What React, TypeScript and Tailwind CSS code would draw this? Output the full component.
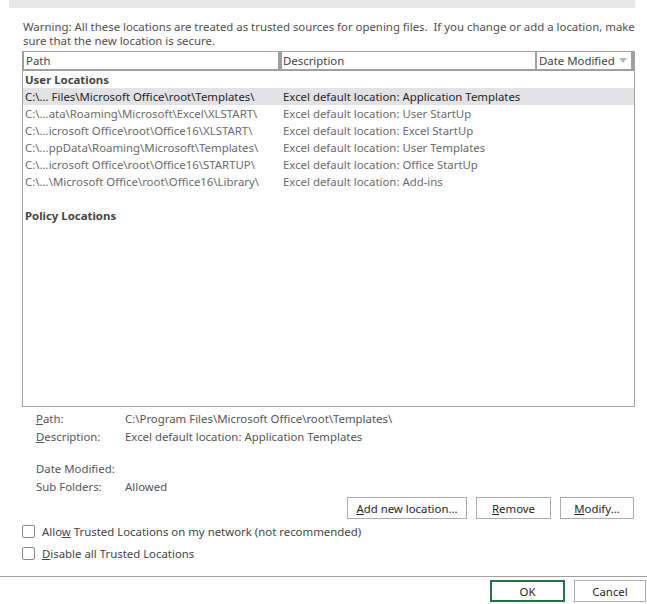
import React from 'react';

const rows = [
  { path: 'C:\\... Files\\Microsoft Office\\root\\Templates\\', desc: 'Excel default location: Application Templates', selected: true },
  { path: 'C:\\...ata\\Roaming\\Microsoft\\Excel\\XLSTART\\', desc: 'Excel default location: User StartUp' },
  { path: 'C:\\...icrosoft Office\\root\\Office16\\XLSTART\\', desc: 'Excel default location: Excel StartUp' },
  { path: 'C:\\...ppData\\Roaming\\Microsoft\\Templates\\', desc: 'Excel default location: User Templates' },
  { path: 'C:\\...icrosoft Office\\root\\Office16\\STARTUP\\', desc: 'Excel default location: Office StartUp' },
  { path: 'C:\\...\\Microsoft Office\\root\\Office16\\Library\\', desc: 'Excel default location: Add-ins' },
];

function Button({ children, className = '' }: { children: React.ReactNode; className?: string }) {
  return (
    <button className={`h-[22px] border border-[#adadad] bg-white text-[#262626] flex items-center justify-center ${className}`}>
      {children}
    </button>
  );
}

function Checkbox({ children }: { children: React.ReactNode }) {
  return (
    <label className="flex items-center h-[18px] pl-[22px] text-[#444]">
      <span className="w-[13px] h-[13px] border border-[#8a8a8a] rounded-[2px] bg-white" />
      <span className="ml-[7px]">{children}</span>
    </label>
  );
}

export default function App() {
  return (
    <div className="w-[647px] h-[604px] bg-white overflow-hidden text-[11.4px] leading-[17px] text-[#444] font-['Segoe_UI','Noto_Sans',sans-serif]">
      <div className="ml-[9px] w-[626px] h-[8px] bg-[#e8e8e8]" />

      <p className="ml-[23px] mt-[12px] w-[615px] leading-[14px] text-[#505050]">
        Warning: All these locations are treated as trusted sources for opening files.&nbsp; If you change or add a location, make sure that the new location is secure.
      </p>

      {/* Locations list */}
      <div className="ml-[22px] mt-[3px] w-[613px] h-[356px] border border-[#a0a0a0] bg-white">
        <div className="flex h-[19px] bg-[#a0a0a0] pl-[1px] pb-[2px]">
          <div className="w-[254px] bg-white pl-[2px] leading-[17px]">Path</div>
          <div className="w-[253px] ml-[4px] bg-white pl-[1px] leading-[17px]">Description</div>
          <div className="w-[94px] ml-[2px] bg-white pl-[2px] leading-[17px] flex items-center justify-between pr-[4px]">
            <span>Date Modified</span>
            <svg width="8" height="5" viewBox="0 0 8 5"><path d="M0 0h8L4 5z" fill="#b8b8b8" /></svg>
          </div>
        </div>
        <div className="h-[17px] pl-[2px] font-bold text-[#444]">User Locations</div>
        {rows.map(r => (
          <div
            key={r.path}
            className={`flex h-[17px] whitespace-nowrap ${r.selected ? 'bg-[#e2e2e7] text-[#262626]' : 'text-[#6b6b6b]'}`}
          >
            <div className="w-[260px] pl-[2px]">{r.path}</div>
            <div>{r.desc}</div>
          </div>
        ))}
        <div className="h-[17px]" />
        <div className="h-[17px] pl-[2px] font-bold text-[#444]">Policy Locations</div>
      </div>

      {/* Details */}
      <div className="mt-[2px] pl-[36px] text-[#555]">
        <div className="flex h-[18px] items-center">
          <span className="w-[89px]"><u>P</u>ath:</span>
          <span>C:\Program Files\Microsoft Office\root\Templates\</span>
        </div>
        <div className="flex h-[18px] items-center">
          <span className="w-[89px]"><u>D</u>escription:</span>
          <span>Excel default location: Application Templates</span>
        </div>
        <div className="h-[14px]" />
        <div className="flex h-[18px] items-center">
          <span className="w-[89px]">Date Modified:</span>
          <span />
        </div>
        <div className="flex h-[19px] items-center">
          <span className="w-[89px]">Sub Folders:</span>
          <span>Allowed</span>
        </div>
      </div>

      <div className="mt-[1px] flex justify-end gap-[9px] pr-[13px]">
        <Button className="w-[120px]"><u>A</u>dd new location...</Button>
        <Button className="w-[75px]"><u>R</u>emove</Button>
        <Button className="w-[74px]"><u>M</u>odify...</Button>
      </div>

      <div className="mt-[3px]">
        <Checkbox>Allo<u>w</u> Trusted Locations on my network (not recommended)</Checkbox>
      </div>
      <div className="mt-[4px]">
        <Checkbox><u>D</u>isable all Trusted Locations</Checkbox>
      </div>

      <div className="mt-[14px] h-px bg-[#a0a0a0]" />

      <div className="mt-[3px] flex gap-[9px] pl-[490px]">
        <Button className="w-[75px] !border-2 !border-[#217346]">OK</Button>
        <Button className="w-[72px] shrink-0">Cancel</Button>
      </div>
    </div>
  );
}
